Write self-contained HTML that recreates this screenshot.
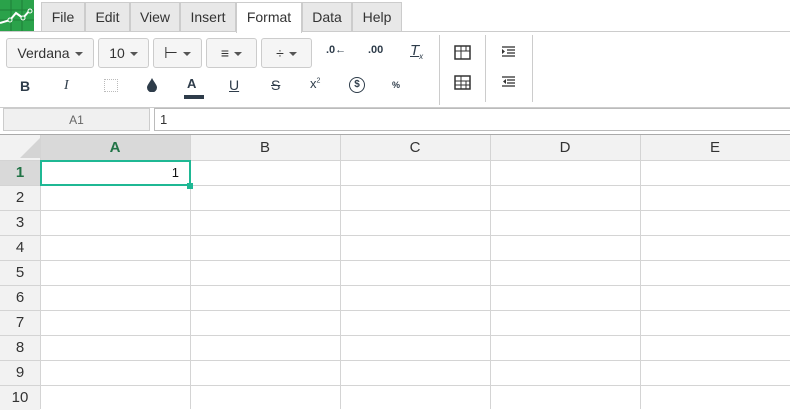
<!DOCTYPE html><html><head><style>
body{margin:0;width:790px;height:409px;overflow:hidden;background:#fff;font-family:"Liberation Sans",Arial,sans-serif;position:relative}
.a{position:absolute}
.tab{position:absolute;top:2px;height:29px;background:#e8e8e8;border:1px solid #ccc;border-bottom:none;font-size:14px;color:#333;line-height:29px;text-align:center;box-sizing:border-box}
.btn{position:absolute;top:38px;height:30px;border:1px solid #ccc;border-radius:3px;background:#f5f5f5;box-sizing:border-box;font-size:14px;color:#333;line-height:28px;text-align:center}
.car{display:inline-block;border-left:4px solid transparent;border-right:4px solid transparent;border-top:4px solid #555;vertical-align:middle;margin-left:5px}
.ic{position:absolute;font-size:13px;color:#2e3c4a;text-align:center}
.g{position:absolute;background:#d4d4d4}
.rh{position:absolute;left:0;width:40px;height:25px;line-height:25px;text-align:center;font-size:15px;color:#333;background:#f2f2f2}
.ch{position:absolute;top:135px;height:25px;line-height:25px;text-align:center;font-size:15px;color:#333;width:150px}
</style></head><body>
<div class="a" style="left:0;top:0;width:34px;height:31px;background:#2aa24a"></div>
<svg class="a" style="left:0;top:0" width="34" height="31"><g stroke="#1f7e38" stroke-width="1"><line x1="0" y1="10" x2="34" y2="10"/><line x1="0" y1="20" x2="34" y2="20"/><line x1="11" y1="0" x2="11" y2="31"/><line x1="22" y1="0" x2="22" y2="31"/></g><polyline points="0,23 10,20 16,13 23,18 30,10" fill="none" stroke="#fff" stroke-width="2"/><circle cx="10" cy="20" r="2" fill="#2aa24a" stroke="#fff"/><circle cx="23" cy="18" r="2" fill="#2aa24a" stroke="#fff"/><circle cx="30" cy="11" r="2" fill="#2aa24a" stroke="#fff"/></svg>
<div class="tab" style="left:41px;width:44px">File</div>
<div class="tab" style="left:85px;width:45px">Edit</div>
<div class="tab" style="left:130px;width:50px">View</div>
<div class="tab" style="left:180px;width:56px">Insert</div>
<div class="tab" style="left:236px;width:66px;background:#fff;height:31px">Format</div>
<div class="tab" style="left:302px;width:50px">Data</div>
<div class="tab" style="left:352px;width:50px">Help</div>
<div class="a" style="left:0;top:31px;width:236px;height:1px;background:#ccc"></div>
<div class="a" style="left:302px;top:31px;width:488px;height:1px;background:#ccc"></div>
<div class="btn" style="left:6px;width:88px">Verdana<span class="car"></span></div>
<div class="btn" style="left:98px;width:51px">10<span class="car"></span></div>
<div class="btn" style="left:153px;width:49px"><b style="font-weight:normal;font-size:16px">⊢</b><span class="car"></span></div>
<div class="btn" style="left:206px;width:51px">≡<span class="car"></span></div>
<div class="btn" style="left:261px;width:51px">÷<span class="car"></span></div>
<div class="ic" style="left:326px;top:44px;font-size:11px;font-weight:bold">.0←</div>
<div class="ic" style="left:368px;top:44px;font-size:11px;font-weight:bold">.00</div>
<div class="ic" style="left:410px;top:42px;font-size:15px;font-style:italic;text-decoration:underline">T<sub style="font-size:8px">x</sub></div>
<div class="ic" style="left:20px;top:78px;font-weight:bold;font-size:14px">B</div>
<div class="ic" style="left:64px;top:78px;font-style:italic;font-size:14px;font-family:'Liberation Serif',serif">I</div>
<div class="a" style="left:104px;top:79px;width:14px;height:13px;border:1px dotted #bbb;box-sizing:border-box"></div>
<svg class="a" style="left:146px;top:77px" width="12" height="15"><path d="M6 1C4 5 1 8 1 10.5A5 5 0 0 0 11 10.5C11 8 8 5 6 1Z" fill="#2e3c4a"/></svg>
<div class="ic" style="left:187px;top:76px;font-weight:bold;font-size:13px">A</div>
<div class="a" style="left:184px;top:95px;width:20px;height:4px;background:#2e3c4a"></div>
<div class="ic" style="left:229px;top:77px;text-decoration:underline;font-size:14px">U</div>
<div class="ic" style="left:271px;top:77px;text-decoration:line-through;font-size:14px">S</div>
<div class="ic" style="left:310px;top:76px;font-size:13px">x<sup style="font-size:7px">2</sup></div>
<div class="ic" style="left:349px;top:77px;width:14px;height:14px;border:1.5px solid #2e3c4a;border-radius:50%;font-size:10px;line-height:14px;font-weight:bold">$</div>
<div class="ic" style="left:392px;top:80px;font-size:9px;font-weight:bold">%</div>
<div class="a" style="left:439px;top:35px;width:1px;height:70px;background:#ccc"></div>
<div class="a" style="left:485px;top:35px;width:1px;height:67px;background:#ccc"></div>
<div class="a" style="left:532px;top:35px;width:1px;height:67px;background:#ccc"></div>
<svg class="a" style="left:454px;top:45px" width="18" height="50"><rect x="1" y="1" width="15" height="13" fill="none" stroke="#333" stroke-width="1.5"/><line x1="1" y1="6" x2="16" y2="6" stroke="#333"/><line x1="7" y1="1" x2="7" y2="14" stroke="#333"/><line x1="12" y1="1" x2="12" y2="6" stroke="#333"/><rect x="1" y="31" width="15" height="13" fill="none" stroke="#333" stroke-width="1.5"/><line x1="1" y1="36" x2="16" y2="36" stroke="#333"/><line x1="1" y1="40" x2="16" y2="40" stroke="#333"/><line x1="7" y1="31" x2="7" y2="44" stroke="#333"/><line x1="12" y1="36" x2="12" y2="44" stroke="#333"/></svg>
<svg class="a" style="left:501px;top:45px" width="16" height="50"><g stroke="#333" stroke-width="1.3"><line x1="1" y1="2" x2="14" y2="2"/><line x1="6" y1="5" x2="14" y2="5"/><line x1="6" y1="8" x2="14" y2="8"/><line x1="1" y1="11" x2="14" y2="11"/><line x1="1" y1="32" x2="14" y2="32"/><line x1="6" y1="35" x2="14" y2="35"/><line x1="6" y1="38" x2="14" y2="38"/><line x1="1" y1="41" x2="14" y2="41"/></g><path d="M1 4l3 2.5-3 2.5zM5 34l-3 2.5 3 2.5z" fill="#333"/></svg>
<div class="a" style="left:0;top:107px;width:790px;height:1px;background:#ccc"></div>
<div class="a" style="left:3px;top:108px;width:147px;height:23px;background:#f0f0f0;border:1px solid #ccc;box-sizing:border-box;font-size:12px;color:#666;text-align:center;line-height:22px">A1</div>
<div class="a" style="left:154px;top:108px;width:640px;height:23px;border:1px solid #bbb;box-sizing:border-box;font-size:13px;color:#333;line-height:22px;padding-left:5px">1</div>
<div class="a" style="left:0;top:134px;width:790px;height:275px;border-top:2px solid #aaa;box-sizing:border-box"></div>
<div class="a" style="left:0;top:135px;width:790px;height:25px;background:#f2f2f2"></div>
<svg class="a" style="left:18px;top:138px" width="22" height="22"><path d="M22 0V20H2z" fill="#d4d4d4"/></svg>
<div class="ch" style="left:40px;background:#d9d9d9;color:#217346;font-weight:bold">A</div>
<div class="ch" style="left:190px">B</div><div class="ch" style="left:340px">C</div><div class="ch" style="left:490px">D</div><div class="ch" style="left:640px">E</div>
<div class="rh" style="top:160px;background:#d9d9d9;color:#217346;font-weight:bold">1</div>
<div class="rh" style="top:185px">2</div><div class="rh" style="top:210px">3</div><div class="rh" style="top:235px">4</div><div class="rh" style="top:260px">5</div><div class="rh" style="top:285px">6</div><div class="rh" style="top:310px">7</div><div class="rh" style="top:335px">8</div><div class="rh" style="top:360px">9</div><div class="rh" style="top:385px">10</div>
<div class="g" style="left:40px;top:135px;width:1px;height:274px"></div>
<div class="g" style="left:190px;top:135px;width:1px;height:274px"></div>
<div class="g" style="left:340px;top:135px;width:1px;height:274px"></div>
<div class="g" style="left:490px;top:135px;width:1px;height:274px"></div>
<div class="g" style="left:640px;top:135px;width:1px;height:274px"></div>
<div class="g" style="left:0;top:160px;width:790px;height:1px"></div>
<div class="g" style="left:0;top:185px;width:790px;height:1px"></div>
<div class="g" style="left:0;top:210px;width:790px;height:1px"></div>
<div class="g" style="left:0;top:235px;width:790px;height:1px"></div>
<div class="g" style="left:0;top:260px;width:790px;height:1px"></div>
<div class="g" style="left:0;top:285px;width:790px;height:1px"></div>
<div class="g" style="left:0;top:310px;width:790px;height:1px"></div>
<div class="g" style="left:0;top:335px;width:790px;height:1px"></div>
<div class="g" style="left:0;top:360px;width:790px;height:1px"></div>
<div class="g" style="left:0;top:385px;width:790px;height:1px"></div>
<div class="a" style="left:40px;top:160px;width:151px;height:26px;border:2px solid #1fb894;box-sizing:border-box;text-align:right;padding-right:10px;font-size:13px;line-height:22px;color:#111">1</div>
<div class="a" style="left:187px;top:183px;width:6px;height:6px;background:#1fb894"></div>
</body></html>
